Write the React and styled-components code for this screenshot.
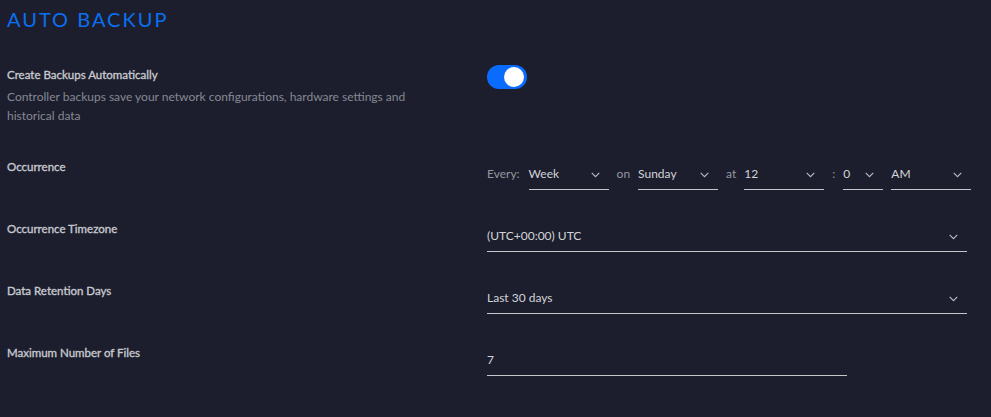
import React from "react";
import styled, { createGlobalStyle } from "styled-components";

const Global = createGlobalStyle`
  html, body { margin: 0; padding: 0; background: #1c1e2d; }
  body { font-family: Lato, "Noto Sans", sans-serif; -webkit-font-smoothing: antialiased; }
  * { box-sizing: border-box; }
`;

const Page = styled.div`
  width: 991px;
  height: 417px;
  background: #1c1e2d;
  padding: 7px 24px 0 7px;
  overflow: hidden;
`;

const Title = styled.h1`
  margin: 0 0 35px;
  font-size: 20px;
  line-height: 24px;
  font-weight: 400;
  letter-spacing: 2px;
  color: #0b6ff2;
`;

const Row = styled.div`
  display: grid;
  grid-template-columns: 480px 1fr;
  align-items: start;
  margin-bottom: ${(p) => p.$gap ?? 30}px;
`;

const Label = styled.div`
  font-size: 11.5px;
  line-height: 18px;
  font-weight: 400;
  -webkit-text-stroke: 0.35px #c6c8ce;
  color: #c6c8ce;
`;

const Desc = styled.div`
  margin-top: 4px;
  font-size: 12px;
  line-height: 18.5px;
  color: #868993;
  width: 410px;
`;

const Toggle = styled.div`
  width: 40px;
  height: 24px;
  border-radius: 12px;
  background: #0a6cff;
  position: relative;
  margin-top: -1px;
`;

const Knob = styled.span`
  position: absolute;
  right: 3px;
  top: 2px;
  width: 20px;
  height: 20px;
  border-radius: 50%;
  background: #ffffff;
`;

const Controls = styled.div`
  display: flex;
  align-items: flex-start;
  gap: 8px;
`;

const Word = styled.span`
  padding-top: 7px;
  font-size: 12px;
  line-height: 18px;
  color: #9597a0;
  margin-right: ${(p) => p.$mr ?? 0}px;
`;

const Field = styled.div`
  width: ${(p) => p.$w};
  height: 32px;
  padding-top: 7px;
  border-bottom: 1px solid #c4c6cc;
  display: flex;
  align-items: flex-start;
  justify-content: space-between;
  font-size: 12px;
  line-height: 18px;
  color: #d2d4d8;
  padding-right: 9px;
`;

const Chevron = () => (
  <svg width="9" height="6" viewBox="0 0 9 6" style={{ marginTop: 7 }}>
    <path d="M0.7 0.8 L4.5 4.6 L8.3 0.8" fill="none" stroke="#b9bbc2" strokeWidth="1.1" />
  </svg>
);

const Select = ({ w, children }) => (
  <Field $w={w}>
    <span>{children}</span>
    <Chevron />
  </Field>
);

export default function App() {
  return (
    <Page>
      <Global />
      <Title>AUTO BACKUP</Title>
      <Row $gap={33}>
        <div>
          <Label>Create Backups Automatically</Label>
          <Desc>
            Controller backups save your network configurations, hardware settings and historical data
          </Desc>
        </div>
        <Toggle>
          <Knob />
        </Toggle>
      </Row>
      <Row>
        <Label>Occurrence</Label>
        <Controls>
          <Word $mr={1}>Every:</Word>
          <Select w="80px">Week</Select>
          <Word>on</Word>
          <Select w="80px">Sunday</Select>
          <Word $mr={0}>at</Word>
          <Select w="80px">12</Select>
          <Word $mr={0}>:</Word>
          <Select w="40px">0</Select>
          <Select w="80px">AM</Select>
        </Controls>
      </Row>
      <Row>
        <Label>Occurrence Timezone</Label>
        <Select w="480px">(UTC+00:00) UTC</Select>
      </Row>
      <Row>
        <Label>Data Retention Days</Label>
        <Select w="480px">Last 30 days</Select>
      </Row>
      <Row>
        <Label>Maximum Number of Files</Label>
        <Field $w="360px">7</Field>
      </Row>
    </Page>
  );
}
